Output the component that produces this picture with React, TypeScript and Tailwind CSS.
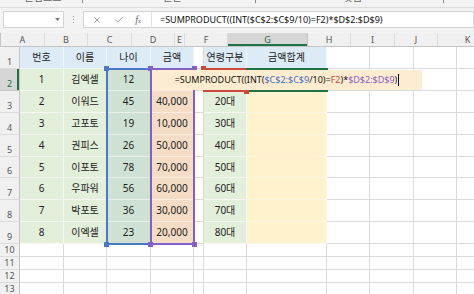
import { X, Check } from 'lucide-react';

const COL_W = ['w-[44px]', 'w-[43px]', 'w-[44px]', 'w-[43px]', 'w-[10px]', 'w-[43px]', 'w-[80px]', 'w-[43px]', 'w-[44px]', 'w-[43px]', 'w-[60px]'];
const LETTERS = ['A', 'B', 'C', 'D', 'E', 'F', 'G', 'H', 'I', 'J', 'K'];

const DATA: string[][] = [
  ['번호', '이름', '나이', '금액', '', '연령구분', '금액합계'],
  ['1', '김엑셀', '12', '', '', '', ''],
  ['2', '이워드', '45', '40,000', '', '20대', ''],
  ['3', '고포토', '19', '10,000', '', '30대', ''],
  ['4', '권피스', '26', '50,000', '', '40대', ''],
  ['5', '이포토', '78', '70,000', '', '50대', ''],
  ['6', '우파워', '56', '60,000', '', '60대', ''],
  ['7', '박포토', '36', '30,000', '', '70대', ''],
  ['8', '이엑셀', '23', '20,000', '', '80대', ''],
];

const ROW_H = ['h-[22px]', 'h-[22px]', 'h-[22px]', 'h-[22px]', 'h-[22px]', 'h-[21px]', 'h-[22px]', 'h-[22px]', 'h-[22px]', 'h-[13px]', 'h-[13px]', 'h-[13px]', 'h-[13px]'];

// fill + gridline colour for a body cell (r is 1-based, c is 0-based from A)
function cellClass(r: number, c: number) {
  if (r === 1) {
    if (c === 4 || c > 6) return 'bg-white border-[#dadada]';
    return 'bg-[#ddebf7] border-[#f3f7fc]';
  }
  if (r <= 9) {
    if (c === 0 || c === 1 || c === 5) return 'bg-[#e2efda] border-[#f4f8f1]';
    if (c === 2) return 'bg-[#cfe1d3] border-[#e6efe8]';
    if (c === 3) return 'bg-[#f4dcc5] border-[#faede1]';
    if (c === 6) return 'bg-[#fff2cc] border-[#fcf6e4]';
  }
  return 'bg-white border-[#dadada]';
}

function Handle({ className }: { className: string }) {
  return <div className={`absolute w-[5px] h-[5px] ${className}`} />;
}

export default function App() {
  return (
    <div className="w-[474px] h-[294px] overflow-hidden bg-white font-['Noto_Sans','Noto_Sans_CJK_KR',sans-serif] text-[#222] select-none">
      {/* ribbon bottom, group labels cut off */}
      <div className="h-[8px] bg-[#f3f3f3] border-b border-[#dcdcdc] overflow-hidden">
        <div className="flex -translate-y-[9px] text-[10px] leading-[12px] text-[#666]">
          <div className="w-[86px] flex justify-center relative">
            클립보드
            <span className="absolute right-[3px] bottom-0 w-px h-[3px] bg-[#888]" />
          </div>
          <div className="w-[173px] flex justify-center relative">
            글꼴
            <span className="absolute right-[3px] bottom-0 w-px h-[3px] bg-[#888]" />
          </div>
          <div className="w-[188px] flex justify-center relative">
            맞춤
            <span className="absolute right-[3px] bottom-0 w-px h-[3px] bg-[#888]" />
          </div>
        </div>
      </div>

      {/* formula bar */}
      <div className="h-[25px] bg-[#f3f3f3] flex items-start pt-[3px]">
        <div className="ml-[3px] w-[61px] h-[17px] bg-white border border-[#d4d4d4] flex items-center justify-end pr-[3px]">
          <svg width="5" height="3" viewBox="0 0 5 3">
            <path d="M0 0h5L2.5 3z" fill="#777" />
          </svg>
        </div>
        <div className="w-[19px] h-[17px] flex flex-col items-center justify-center gap-[2px]">
          <span className="w-px h-px bg-[#999]" />
          <span className="w-px h-px bg-[#999]" />
          <span className="w-px h-px bg-[#999]" />
        </div>
        <div className="flex-1 h-[17px] bg-white border border-[#d4d4d4] flex items-center">
          <div className="w-[67px] flex items-center justify-around pl-[2px] pr-[4px] text-[#666]">
            <X size={10} strokeWidth={1.5} />
            <Check size={10} strokeWidth={1.7} />
            <span className="font-['Liberation_Serif',serif] italic text-[10px] leading-none">
              f<span className="text-[7px]">x</span>
            </span>
          </div>
          <div className="flex-1 h-full border-l border-[#e2e2e2] pl-[8px] flex items-center text-[9px] text-[#111] whitespace-nowrap">
            =SUMPRODUCT((INT($C$2:$C$9/10)=F2)*$D$2:$D$9)
          </div>
        </div>
      </div>

      {/* sheet */}
      <div className="relative">
        {/* column headers */}
        <div className="flex h-[14px] bg-[#f0f0f0] border-b border-[#c4c4c4]">
          <div className="w-[20px] relative border-r border-[#c4c4c4]">
            <svg className="absolute right-[2px] bottom-[2px]" width="8" height="8" viewBox="0 0 8 8">
              <path d="M8 0v8H0z" fill="#b5b5b5" />
            </svg>
          </div>
          {LETTERS.map((l, i) => (
            <div
              key={l}
              className={`${COL_W[i]} shrink-0 flex items-center justify-center text-[9px] border-r ${
                l === 'G'
                  ? 'bg-[#d6d6d6] text-[#1e6b3f] border-[#c4c4c4] shadow-[inset_0_-2px_0_#217346]'
                  : 'text-[#555] border-[#dadada]'
              }`}
            >
              {l}
            </div>
          ))}
        </div>

        {/* rows */}
        {ROW_H.map((h, ri) => {
          const r = ri + 1;
          const vals = DATA[ri] ?? [];
          return (
            <div key={r} className={`flex ${h}`}>
              <div
                className={`w-[20px] shrink-0 flex items-end justify-center pb-[1px] border-b border-r text-[9px] leading-[11px] ${
                  r === 2
                    ? 'bg-[#d6d6d6] text-[#1e6b3f] border-b-[#c4c4c4] border-r-[#c4c4c4] shadow-[inset_-2px_0_0_#217346]'
                    : 'bg-[#f0f0f0] text-[#555] border-b-[#dcdcdc] border-r-[#c4c4c4]'
                }`}
              >
                {r}
              </div>
              {COL_W.map((w, c) => (
                <div
                  key={c}
                  className={`${w} shrink-0 border-r border-b flex items-center justify-center text-[10px] ${cellClass(r, c)}`}
                >
                  {vals[c] ?? ''}
                </div>
              ))}
            </div>
          );
        })}

        {/* reference ranges */}
        <div className="absolute left-[106px] top-[35px] w-[46px] h-[177px] border-2 border-[#4a78c8]" />
        <div className="absolute left-[150px] top-[35px] w-[45px] h-[177px] border-2 border-[#8161c6]" />
        <Handle className="left-[104px] top-[33px] bg-[#4a78c8]" />
        <Handle className="left-[104px] top-[209px] bg-[#4a78c8]" />
        <Handle className="left-[148px] top-[33px] bg-[#8161c6]" />
        <Handle className="left-[148px] top-[209px] bg-[#8161c6]" />
        <Handle className="left-[192px] top-[33px] bg-[#8161c6]" />
        <Handle className="left-[192px] top-[209px] bg-[#8161c6]" />

        {/* F2 reference and active G2 */}
        <div className="absolute left-[203px] top-[35px] w-[45px] h-[24px] border-2 border-[#d0473c]" />
        <div className="absolute left-[246px] top-[35px] w-[82px] h-[24px] border-2 border-[#217346]" />
        <Handle className="left-[201px] top-[33px] bg-[#d0473c]" />
        <Handle className="left-[244px] top-[56px] bg-[#d0473c]" />

        {/* in-cell editor */}
        <div className="absolute left-[152px] top-[37px] w-[270px] h-[20px] bg-[#fdecd0] flex items-center justify-center text-[9px] whitespace-nowrap text-[#111]">
          <span>=SUMPRODUCT((INT(</span>
          <span className="text-[#3f6fc4]">$C$2:$C$9</span>
          <span>/10)=</span>
          <span className="text-[#d0473c]">F2</span>
          <span>)*</span>
          <span className="text-[#8a5cc4]">$D$2:$D$9</span>
          <span>)</span>
          <span className="w-px h-[12px] bg-black ml-[1px]" />
        </div>
      </div>
    </div>
  );
}
